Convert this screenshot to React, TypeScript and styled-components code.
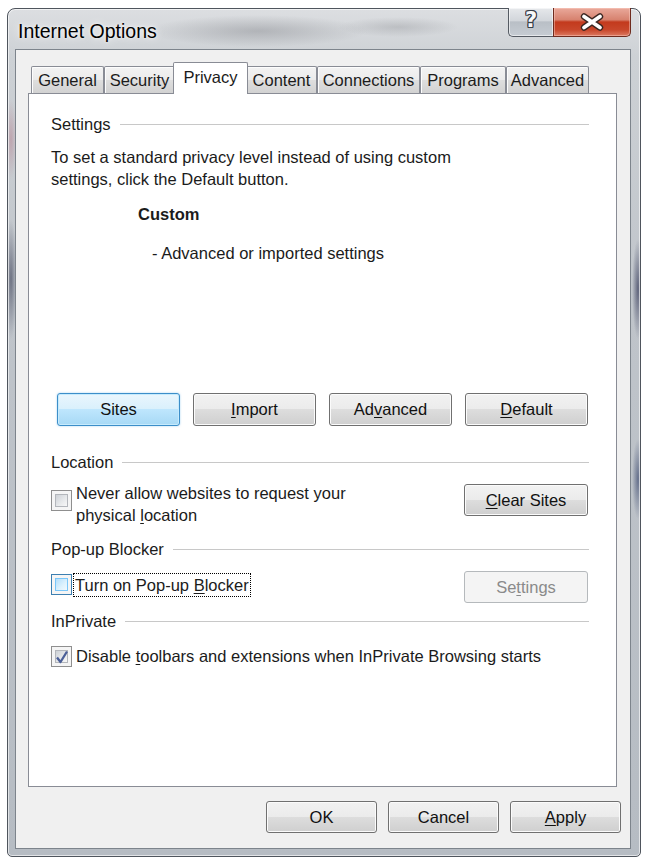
import React from "react";
import styled, { createGlobalStyle, css } from "styled-components";

const GlobalStyle = createGlobalStyle`
  html, body { margin: 0; padding: 0; background: #ffffff; }
  body {
    font-family: "Liberation Sans", Arial, sans-serif;
    font-size: 16.5px;
    color: #1b1b1b;
  }
  * { box-sizing: border-box; }
`;

const Window = styled.div`
  margin: 8px 0 0 7px;
  width: 634px;
  height: 849px;
  border: 1px solid #4f555d;
  border-radius: 8px 8px 5px 5px;
  display: flex;
  flex-direction: column;
  padding: 0 9px 7px 7px;
  box-shadow: inset 0 0 0 1px rgba(255, 255, 255, 0.6);
  background:
    radial-gradient(ellipse 110px 16px at 250px 22px, rgba(110, 112, 118, 0.35), transparent),
    radial-gradient(ellipse 60px 10px at 390px 18px, rgba(110, 112, 118, 0.25), transparent),
    radial-gradient(ellipse 6px 40px at 3px 130px, rgba(170, 90, 110, 0.35), transparent),
    radial-gradient(ellipse 6px 60px at 3px 270px, rgba(40, 45, 70, 0.55), transparent),
    radial-gradient(ellipse 6px 50px at 630px 280px, rgba(30, 35, 70, 0.6), transparent),
    radial-gradient(ellipse 6px 40px at 630px 470px, rgba(30, 45, 90, 0.55), transparent),
    linear-gradient(#dcdee1 0px, #cdd1d5 48px, #bfc4ca 300px, #b6bcc3 100%);
`;

const TitleBar = styled.div`
  height: 40px;
  flex: none;
  display: flex;
  align-items: flex-start;
`;

const Title = styled.div`
  margin: 11px 0 0 3px;
  font-size: 19.5px;
  line-height: 22px;
  color: #000;
  text-shadow: 0 0 8px rgba(255, 255, 255, 0.95), 0 0 3px rgba(255, 255, 255, 0.9);
`;

const CaptionButtons = styled.div`
  margin: -1px 0 0 auto;
  display: flex;
`;

const CaptionButton = styled.div<{ $variant: "help" | "close" }>`
  height: 29px;
  display: flex;
  align-items: center;
  justify-content: center;
  border: 1px solid #555b63;
  border-top: none;
  ${(p) =>
    p.$variant === "help"
      ? css`
          width: 45px;
          border-radius: 0 0 0 5px;
          border-right: none;
          background: linear-gradient(#e6e8eb 0%, #d2d6db 45%, #b9bfc6 50%, #c6ccd3 100%);
          box-shadow: inset 0 0 0 1px rgba(255, 255, 255, 0.55);
        `
      : css`
          width: 78px;
          border-radius: 0 0 5px 0;
          border-color: #6e2b1e;
          background: linear-gradient(#e9a99b 0%, #d7826f 42%, #c33a1d 50%, #c8472b 78%, #dc7a61 100%);
          box-shadow: inset 0 0 0 1px rgba(255, 210, 200, 0.45);
        `}
`;

const HelpGlyph = styled.span`
  font-family: "DejaVu Sans", "Liberation Sans", sans-serif;
  font-weight: bold;
  font-size: 21px;
  line-height: 1;
  color: #f7f8fa;
  text-shadow:
    -1px 0 #3a4048, 1px 0 #3a4048, 0 -1px #3a4048, 0 1px #3a4048,
    -1px -1px #3a4048, 1px 1px #3a4048, -1px 1px #3a4048, 1px -1px #3a4048;
  margin-top: -3px;
`;

const Client = styled.div`
  flex: 1;
  display: flex;
  flex-direction: column;
  border: 1px solid #7d848c;
  background: #f0f0f0;
  padding: 12px 9px 15px 12px;
`;

const TabRow = styled.div`
  display: flex;
  align-items: flex-end;
  height: 32px;
  margin: 0 0 -1px 3px;
  position: relative;
  z-index: 1;
`;

const Tab = styled.div<{ $active?: boolean; $w: number }>`
  flex: none;
  display: flex;
  align-items: center;
  justify-content: center;
  border: 1px solid #898c95;
  border-bottom: none;
  border-radius: 2px 2px 0 0;
  color: #1b1b1b;
  ${(p) =>
    p.$active
      ? css`
          width: ${p.$w + 4}px;
          height: 32px;
          margin: 0 -2px;
          padding-bottom: 3px;
          background: #ffffff;
          position: relative;
          z-index: 2;
        `
      : css`
          width: ${p.$w}px;
          height: 27px;
          margin-bottom: 1px;
          background: linear-gradient(#f3f3f3 0%, #ebebeb 50%, #dedede 51%, #d2d2d2 100%);
          box-shadow: inset 1px 1px 0 #fdfdfd;
        `}
`;

const Panel = styled.div`
  flex: 1;
  display: flex;
  flex-direction: column;
  background: #ffffff;
  border: 1px solid #898c95;
  margin-right: 4px;
  padding: 19px 27px 0 22px;
`;

const SectionHeader = styled.div<{ $mt: number }>`
  display: flex;
  align-items: center;
  gap: 9px;
  height: 22px;
  margin-top: ${(p) => p.$mt}px;
  &::after {
    content: "";
    flex: 1;
    height: 1px;
    background: #c8c8c8;
  }
`;

const Paragraph = styled.p`
  margin: 11px 0 0;
  line-height: 22px;
`;

const LevelName = styled.div`
  margin-top: 13px;
  padding-left: 87px;
  font-weight: bold;
  line-height: 22px;
`;

const LevelDesc = styled.div`
  margin-top: 17px;
  padding-left: 101px;
  line-height: 22px;
`;

const ButtonGrid = styled.div`
  display: grid;
  grid-template-columns: repeat(4, 1fr);
  gap: 13px;
  margin: 129px 1px 0 6px;
`;

const Button = styled.div<{ $kind?: "default" | "disabled"; $w?: number; $h?: number }>`
  height: ${(p) => p.$h ?? 32}px;
  ${(p) => p.$w && css`width: ${p.$w}px; flex: none;`}
  display: flex;
  align-items: center;
  justify-content: center;
  border: 1px solid #707070;
  border-radius: 3px;
  color: #111;
  background: linear-gradient(#f2f2f2 0%, #ebebeb 49%, #dddddd 50%, #cfcfcf 100%);
  box-shadow: inset 0 0 0 1px #fbfbfb;
  ${(p) =>
    p.$kind === "default" &&
    css`
      border-color: #3c8ec9;
      background: linear-gradient(#eaf6fd 0%, #d9f0fc 49%, #bee6fd 50%, #a7d9f5 100%);
      box-shadow: inset 0 0 0 1px #c6ebfd, 0 0 2px rgba(60, 160, 230, 0.5);
    `}
  ${(p) =>
    p.$kind === "disabled" &&
    css`
      border-color: #b5b9bc;
      background: #f4f4f4;
      color: #8a8a8a;
      box-shadow: none;
    `}
`;

const Key = styled.span`
  text-decoration: underline;
  text-decoration-thickness: 1px;
  text-underline-offset: 2px;
`;

const OptionRow = styled.div<{ $mt: number }>`
  display: flex;
  align-items: flex-start;
  justify-content: space-between;
  margin-top: ${(p) => p.$mt}px;
`;

const CheckLabel = styled.div`
  display: flex;
  align-items: flex-start;
  gap: 4px;
  line-height: 22px;
`;

const Box = styled.div<{ $state?: "hover" | "plain"; $mt: number }>`
  flex: none;
  width: 21px;
  height: 21px;
  margin-top: ${(p) => p.$mt}px;
  border: 1px solid ${(p) => (p.$state === "hover" ? "#3c7fb1" : "#8f8f8f")};
  background: #f5f5f5;
  padding: 3px;
  display: flex;
  & > span {
    flex: 1;
    display: flex;
    align-items: center;
    justify-content: center;
    border: 1px solid ${(p) => (p.$state === "hover" ? "#79c6f9" : "#b3b6bb")};
    background: ${(p) =>
      p.$state === "hover"
        ? "linear-gradient(135deg, #b4defb 0%, #def2fd 60%, #f0f9ff 100%)"
        : "linear-gradient(135deg, #cdd1d6 0%, #e6e8ea 55%, #f8f8f8 100%)"};
  }
`;

const FocusText = styled.span`
  margin: 2px 0 0 -3px;
  padding: 0 1px;
  line-height: 22px;
  border: 1px dotted #000;
`;

const Footer = styled.div`
  display: flex;
  justify-content: flex-end;
  gap: 11px;
  margin-top: 14px;
`;

const Checkbox: React.FC<{ checked?: boolean; state?: "hover" | "plain"; mt: number }> = ({
  checked,
  state = "plain",
  mt,
}) => (
  <Box $state={state} $mt={mt}>
    <span>
      {checked && (
        <svg width="18" height="18" viewBox="0 0 18 18" style={{ margin: "-4px" }}>
          <path d="M4 9.5 L7.5 14 L14 3.5" fill="none" stroke="#4b5f98" strokeWidth="2.3" strokeLinejoin="round" />
        </svg>
      )}
    </span>
  </Box>
);

const tabs = [
  { label: "General", w: 73 },
  { label: "Security", w: 71 },
  { label: "Privacy", w: 71, active: true },
  { label: "Content", w: 71 },
  { label: "Connections", w: 103 },
  { label: "Programs", w: 86 },
  { label: "Advanced", w: 83 },
];

export default function App() {
  return (
    <>
      <GlobalStyle />
      <Window>
        <TitleBar>
          <Title>Internet Options</Title>
          <CaptionButtons>
            <CaptionButton $variant="help">
              <HelpGlyph>?</HelpGlyph>
            </CaptionButton>
            <CaptionButton $variant="close">
              <svg width="28" height="18" viewBox="0 0 28 18">
                <path d="M6 3.5 L22 14.5 M22 3.5 L6 14.5" stroke="#3b2621" strokeWidth="6.4" strokeLinecap="round" />
                <path d="M6 3.5 L22 14.5 M22 3.5 L6 14.5" stroke="#ffffff" strokeWidth="3.8" strokeLinecap="round" />
              </svg>
            </CaptionButton>
          </CaptionButtons>
        </TitleBar>
        <Client>
          <TabRow>
            {tabs.map((t) => (
              <Tab key={t.label} $active={t.active} $w={t.w}>
                {t.label}
              </Tab>
            ))}
          </TabRow>
          <Panel>
            <SectionHeader $mt={0}>Settings</SectionHeader>
            <Paragraph>
              To set a standard privacy level instead of using custom
              <br />
              settings, click the Default button.
            </Paragraph>
            <LevelName>Custom</LevelName>
            <LevelDesc>- Advanced or imported settings</LevelDesc>
            <ButtonGrid>
              <Button $kind="default" $h={33}>Sites</Button>
              <Button $h={33}>
                <Key>I</Key>mport
              </Button>
              <Button $h={33}>
                Ad<Key>v</Key>anced
              </Button>
              <Button $h={33}>
                <Key>D</Key>efault
              </Button>
            </ButtonGrid>

            <SectionHeader $mt={25}>Location</SectionHeader>
            <OptionRow $mt={9}>
              <CheckLabel>
                <Checkbox mt={8} />
                <span>
                  Never allow websites to request your
                  <br />
                  physical <Key>l</Key>ocation
                </span>
              </CheckLabel>
              <Button $w={124} style={{ marginTop: 2, marginRight: 1 }}>
                <Key>C</Key>lear Sites
              </Button>
            </OptionRow>

            <SectionHeader $mt={12}>Pop-up Blocker</SectionHeader>
            <OptionRow $mt={11}>
              <CheckLabel>
                <Checkbox mt={3} state="hover" />
                <FocusText>
                  Turn on Pop-up <Key>B</Key>locker
                </FocusText>
              </CheckLabel>
              <Button $w={124} $kind="disabled" style={{ marginRight: 1 }}>
                Se<Key>t</Key>tings
              </Button>
            </OptionRow>

            <SectionHeader $mt={7}>InPrivate</SectionHeader>
            <OptionRow $mt={13}>
              <CheckLabel>
                <Checkbox mt={1} checked />
                <span>
                  Disable <Key>t</Key>oolbars and extensions when InPrivate Browsing starts
                </span>
              </CheckLabel>
            </OptionRow>
          </Panel>
          <Footer>
            <Button $w={111}>OK</Button>
            <Button $w={111}>Cancel</Button>
            <Button $w={111}>
              <Key>A</Key>pply
            </Button>
          </Footer>
        </Client>
      </Window>
    </>
  );
}
